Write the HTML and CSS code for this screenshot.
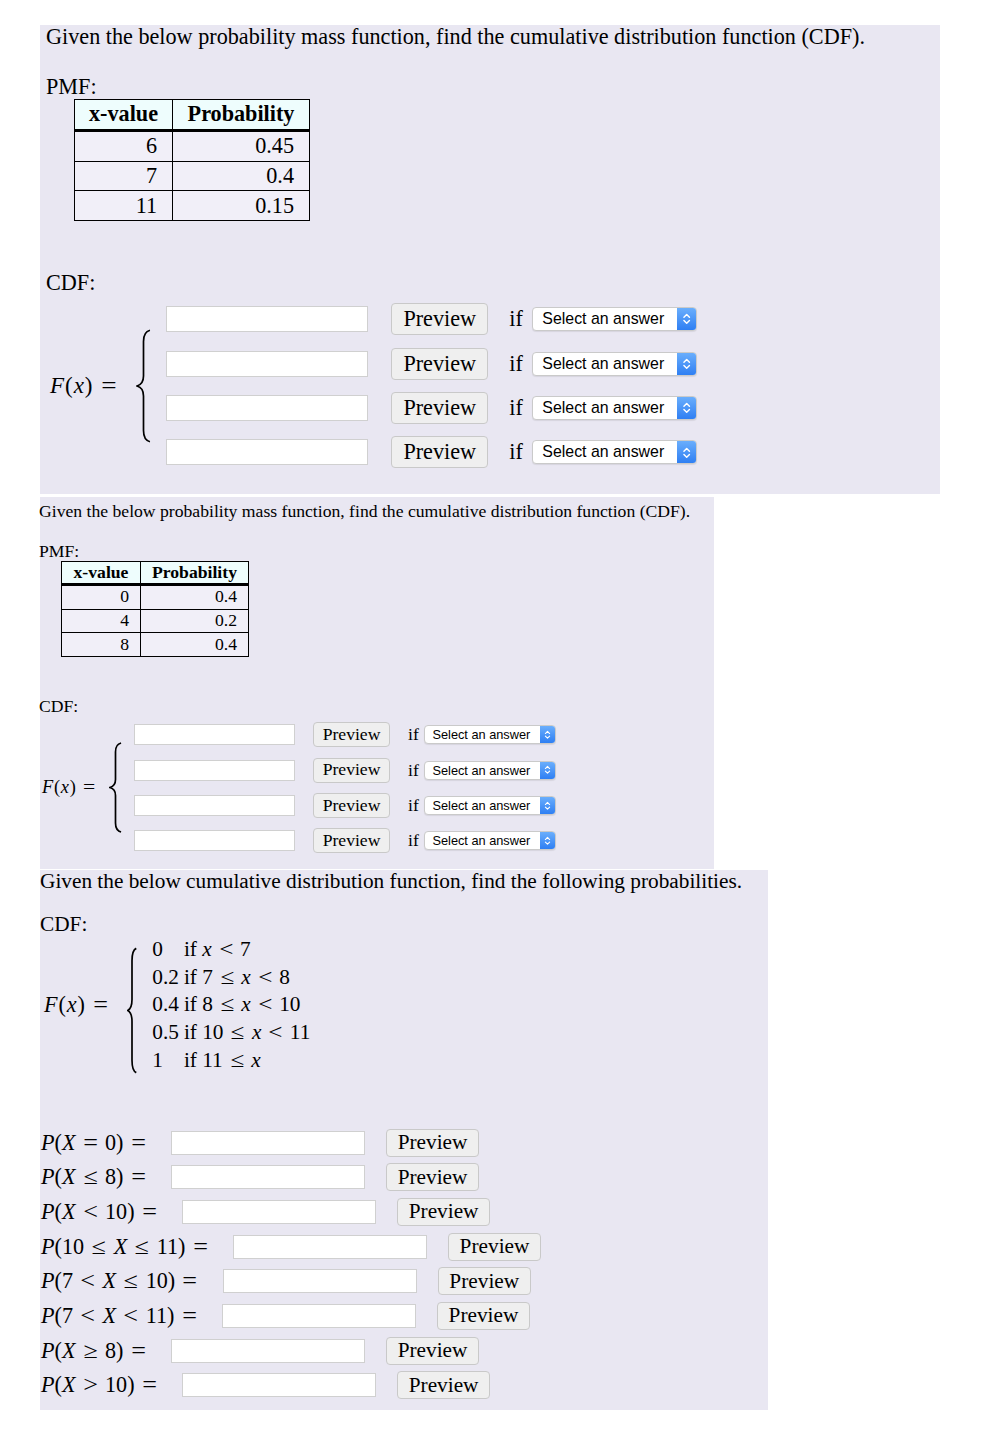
FILE: index.html
```html
<!DOCTYPE html>
<html>
<head>
<meta charset="utf-8">
<link rel="stylesheet" href="styles.css">
</head>
<body>
<div class="page">

  <section class="panel p1">
    <div class="title">Given the below probability mass function, find the cumulative distribution function (CDF).</div>
    <div class="label lbl-pmf">PMF:</div>
    <table class="pmf">
      <thead><tr><th class="c1">x-value</th><th class="c2">Probability</th></tr></thead>
      <tbody>
        <tr><td>6</td><td>0.45</td></tr>
        <tr><td>7</td><td>0.4</td></tr>
        <tr><td>11</td><td>0.15</td></tr>
      </tbody>
    </table>
    <div class="label lbl-cdf">CDF:</div>
    <div class="piecewise">
      <div class="fx math"><i>F</i>(<i>x</i>)<span class="rel">=</span></div>
      <svg class="brace" viewBox="0 0 14 92" preserveAspectRatio="none"><path d="M13 1 C8.5 2 7 5 7 10 L7 38 C7 43 5 45 1 46 C5 47 7 49 7 54 L7 82 C7 87 8.5 90 13 91" /></svg>
      <div class="rows">
        <div class="row"><input class="ans" type="text"><button class="preview">Preview</button><span class="if">if</span><span class="select"><span class="sel-text">Select an answer</span><span class="sel-arrow"><svg viewBox="0 0 10 16"><path d="M2.5 6.5 L5 4 L7.5 6.5 M2.5 9.5 L5 12 L7.5 9.5"/></svg></span></span></div>
        <div class="row"><input class="ans" type="text"><button class="preview">Preview</button><span class="if">if</span><span class="select"><span class="sel-text">Select an answer</span><span class="sel-arrow"><svg viewBox="0 0 10 16"><path d="M2.5 6.5 L5 4 L7.5 6.5 M2.5 9.5 L5 12 L7.5 9.5"/></svg></span></span></div>
        <div class="row"><input class="ans" type="text"><button class="preview">Preview</button><span class="if">if</span><span class="select"><span class="sel-text">Select an answer</span><span class="sel-arrow"><svg viewBox="0 0 10 16"><path d="M2.5 6.5 L5 4 L7.5 6.5 M2.5 9.5 L5 12 L7.5 9.5"/></svg></span></span></div>
        <div class="row"><input class="ans" type="text"><button class="preview">Preview</button><span class="if">if</span><span class="select"><span class="sel-text">Select an answer</span><span class="sel-arrow"><svg viewBox="0 0 10 16"><path d="M2.5 6.5 L5 4 L7.5 6.5 M2.5 9.5 L5 12 L7.5 9.5"/></svg></span></span></div>
      </div>
    </div>
  </section>

  <section class="panel p2">
    <div class="title">Given the below probability mass function, find the cumulative distribution function (CDF).</div>
    <div class="label lbl-pmf">PMF:</div>
    <table class="pmf">
      <thead><tr><th class="c1">x-value</th><th class="c2">Probability</th></tr></thead>
      <tbody>
        <tr><td>0</td><td>0.4</td></tr>
        <tr><td>4</td><td>0.2</td></tr>
        <tr><td>8</td><td>0.4</td></tr>
      </tbody>
    </table>
    <div class="label lbl-cdf">CDF:</div>
    <div class="piecewise">
      <div class="fx math"><i>F</i>(<i>x</i>)<span class="rel">=</span></div>
      <svg class="brace" viewBox="0 0 14 92" preserveAspectRatio="none"><path d="M13 1 C8.5 2 7 5 7 10 L7 38 C7 43 5 45 1 46 C5 47 7 49 7 54 L7 82 C7 87 8.5 90 13 91" /></svg>
      <div class="rows">
        <div class="row"><input class="ans" type="text"><button class="preview">Preview</button><span class="if">if</span><span class="select"><span class="sel-text">Select an answer</span><span class="sel-arrow"><svg viewBox="0 0 10 16"><path d="M2.5 6.5 L5 4 L7.5 6.5 M2.5 9.5 L5 12 L7.5 9.5"/></svg></span></span></div>
        <div class="row"><input class="ans" type="text"><button class="preview">Preview</button><span class="if">if</span><span class="select"><span class="sel-text">Select an answer</span><span class="sel-arrow"><svg viewBox="0 0 10 16"><path d="M2.5 6.5 L5 4 L7.5 6.5 M2.5 9.5 L5 12 L7.5 9.5"/></svg></span></span></div>
        <div class="row"><input class="ans" type="text"><button class="preview">Preview</button><span class="if">if</span><span class="select"><span class="sel-text">Select an answer</span><span class="sel-arrow"><svg viewBox="0 0 10 16"><path d="M2.5 6.5 L5 4 L7.5 6.5 M2.5 9.5 L5 12 L7.5 9.5"/></svg></span></span></div>
        <div class="row"><input class="ans" type="text"><button class="preview">Preview</button><span class="if">if</span><span class="select"><span class="sel-text">Select an answer</span><span class="sel-arrow"><svg viewBox="0 0 10 16"><path d="M2.5 6.5 L5 4 L7.5 6.5 M2.5 9.5 L5 12 L7.5 9.5"/></svg></span></span></div>
      </div>
    </div>
  </section>

  <section class="panel p3">
    <div class="title">Given the below cumulative distribution function, find the following probabilities.</div>
    <div class="label lbl-cdf">CDF:</div>
    <div class="cases-block">
      <div class="fx math"><i>F</i>(<i>x</i>)<span class="rel">=</span></div>
      <svg class="brace" viewBox="0 0 14 92" preserveAspectRatio="none"><path d="M13 1 C8.5 2 7 5 7 10 L7 38 C7 43 5 45 1 46 C5 47 7 49 7 54 L7 82 C7 87 8.5 90 13 91" /></svg>
      <div class="cases">
        <span class="cv">0</span><span class="cc">if <i>x</i><span class="rel">&lt;</span>7</span>
        <span class="cv">0.2</span><span class="cc">if 7<span class="rel">≤</span><i>x</i><span class="rel">&lt;</span>8</span>
        <span class="cv">0.4</span><span class="cc">if 8<span class="rel">≤</span><i>x</i><span class="rel">&lt;</span>10</span>
        <span class="cv">0.5</span><span class="cc">if 10<span class="rel">≤</span><i>x</i><span class="rel">&lt;</span>11</span>
        <span class="cv">1</span><span class="cc">if 11<span class="rel">≤</span><i>x</i></span>
      </div>
    </div>
    <div class="probs">
      <div class="prow"><span class="plabel math"><i>P</i>(<i>X</i><span class="rel">=</span>0)<span class="rel">=</span></span><input class="ans" type="text"><button class="preview">Preview</button></div>
      <div class="prow"><span class="plabel math"><i>P</i>(<i>X</i><span class="rel">≤</span>8)<span class="rel">=</span></span><input class="ans" type="text"><button class="preview">Preview</button></div>
      <div class="prow"><span class="plabel math"><i>P</i>(<i>X</i><span class="rel">&lt;</span>10)<span class="rel">=</span></span><input class="ans" type="text"><button class="preview">Preview</button></div>
      <div class="prow"><span class="plabel math"><i>P</i>(10<span class="rel">≤</span><i>X</i><span class="rel">≤</span>11)<span class="rel">=</span></span><input class="ans" type="text"><button class="preview">Preview</button></div>
      <div class="prow"><span class="plabel math"><i>P</i>(7<span class="rel">&lt;</span><i>X</i><span class="rel">≤</span>10)<span class="rel">=</span></span><input class="ans" type="text"><button class="preview">Preview</button></div>
      <div class="prow"><span class="plabel math"><i>P</i>(7<span class="rel">&lt;</span><i>X</i><span class="rel">&lt;</span>11)<span class="rel">=</span></span><input class="ans" type="text"><button class="preview">Preview</button></div>
      <div class="prow"><span class="plabel math"><i>P</i>(<i>X</i><span class="rel">≥</span>8)<span class="rel">=</span></span><input class="ans" type="text"><button class="preview">Preview</button></div>
      <div class="prow"><span class="plabel math"><i>P</i>(<i>X</i><span class="rel">&gt;</span>10)<span class="rel">=</span></span><input class="ans" type="text"><button class="preview">Preview</button></div>
    </div>
  </section>

</div>
</body>
</html>
```

FILE: styles.css
```css
html, body {
  margin: 0;
  padding: 0;
  background: #ffffff;
}

body {
  font-family: "Liberation Serif", "Times New Roman", serif;
  color: #000;
}

.page {
  padding: 26px 0 0 40px;
}

.panel {
  background: #e9e7f2;
  box-sizing: border-box;
  font-size: var(--fs);
}

.title, .label {
  line-height: var(--lh);
  white-space: nowrap;
}

/* ---------- panel 1 (large) ---------- */
.p1 {
  --fs: 22.2px;
  --lh: 23px;
  --in-w: 202px;
  --in-h: 26px;
  --btn-w: 97px;
  --btn-h: 32px;
  --sel-w: 165px;
  --sel-h: 24px;
  --sel-fs: 15.9px;
  --arrow-w: 19px;
  --row-h: 44.4px;
  --gap-ib: 23px;
  --gap-bi: 21px;
  --gap-is: 9px;
  width: 900px;
  height: 469px;
  padding: 0 0 0 6px;
}
.p1 .title { margin-top: -1px; }
.p1 .lbl-pmf { margin-top: 27px; }
.p1 .pmf { margin: 1px 0 0 28px; width: 236px; }
.p1 .pmf .c1 { width: 97px; }
.p1 .pmf th { height: 29px; }
.p1 .pmf td { height: 28.7px; padding-right: 15px; }
.p1 .lbl-cdf { margin-top: 50px; }
.p1 .piecewise { margin-top: 3px; }
.p1 .fx { margin-left: 4px; }
.p1 .brace { width: 15px; height: 114px; margin: 0 15px 0 12px; }

/* ---------- panel 2 (small) ---------- */
.p2 {
  --fs: 17.65px;
  --lh: 18.4px;
  --in-w: 161px;
  --in-h: 21px;
  --btn-w: 77px;
  --btn-h: 25px;
  --sel-w: 132px;
  --sel-h: 19px;
  --sel-fs: 12.75px;
  --arrow-w: 15px;
  --row-h: 35.3px;
  --gap-ib: 18px;
  --gap-bi: 18px;
  --gap-is: 5px;
  width: 674px;
  height: 372px;
  margin-top: 3px;
  padding: 5px 0 0 0;
}
.p2 .title { margin-left: -1px; }
.p2 .lbl-pmf { margin-top: 22px; margin-left: -1px; }
.p2 .pmf { margin: 0 0 0 21px; width: 188px; }
.p2 .pmf .c1 { width: 78px; }
.p2 .pmf th { height: 21px; }
.p2 .pmf td { height: 22.7px; padding-right: 11px; }
.p2 .lbl-cdf { margin-top: 40px; margin-left: -1px; }
.p2 .piecewise { margin-top: 2px; }
.p2 .fx { margin-left: 2px; }
.p2 .brace { width: 13px; height: 91px; margin: 0 12px 0 8px; }

/* ---------- PMF table ---------- */
.pmf {
  border-collapse: collapse;
  table-layout: fixed;
  border: 1px solid #000;
  font-size: 1em;
}
.pmf th {
  background: #eefdfd;
  font-weight: bold;
  padding: 0;
  border: 1px solid #000;
  border-bottom: 3px solid #000;
  text-align: center;
  line-height: 1.1em;
}
.pmf td {
  background: #f1eff8;
  border: 1px solid #000;
  padding-top: 0;
  padding-bottom: 0;
  padding-left: 0;
  text-align: right;
  line-height: 1.1em;
}

/* ---------- math ---------- */
.math {
  font-size: 1.04em;
  white-space: nowrap;
}
.fx {
  letter-spacing: 0.04em;
}
.rel {
  display: inline-block;
  width: 0.78em;
  margin: 0 0.278em;
  text-align: center;
  letter-spacing: 0;
  transform: scaleX(1.18);
}

/* ---------- piecewise with inputs ---------- */
.piecewise {
  display: flex;
  align-items: center;
}
.brace {
  flex: none;
}
.brace path {
  fill: none;
  stroke: #000;
  stroke-width: 1.7;
  vector-effect: non-scaling-stroke;
}
.rows {
  display: flex;
  flex-direction: column;
}
.row {
  display: flex;
  align-items: center;
  height: var(--row-h);
}

.ans {
  box-sizing: border-box;
  flex: none;
  width: var(--in-w);
  height: var(--in-h);
  margin: 0;
  padding: 0 4px;
  border: 1px solid #d0d0d0;
  background: #fff;
  font-size: 1em;
  outline: none;
}

.preview {
  box-sizing: border-box;
  flex: none;
  width: var(--btn-w);
  height: var(--btn-h);
  margin: 0 0 0 var(--gap-ib);
  padding: 0;
  font-family: "Liberation Serif", "Times New Roman", serif;
  font-size: var(--fs);
  line-height: 1;
  background: #efefef;
  border: 1px solid #c9c9c9;
  border-radius: 4px;
  color: #000;
}

.if {
  margin: 0 var(--gap-is) 0 var(--gap-bi);
}

.select {
  box-sizing: border-box;
  display: flex;
  align-items: stretch;
  width: var(--sel-w);
  height: var(--sel-h);
  background: #fff;
  border: 1px solid #cacaca;
  border-radius: 4px;
  overflow: hidden;
  box-shadow: 0 1px 1px rgba(0,0,0,0.08);
}
.sel-text {
  flex: 1;
  font-family: "Liberation Sans", Arial, sans-serif;
  font-size: var(--sel-fs);
  line-height: calc(var(--sel-h) - 2px);
  padding-left: calc(var(--sel-fs) * 0.6);
  white-space: nowrap;
  overflow: hidden;
}
.sel-arrow {
  flex: none;
  width: var(--arrow-w);
  background: linear-gradient(#6aaefc, #2f7ff3);
  display: flex;
  align-items: center;
  justify-content: center;
}
.sel-arrow svg {
  width: 60%;
  height: 80%;
}
.sel-arrow path {
  fill: none;
  stroke: #fff;
  stroke-width: 1.3;
  stroke-linecap: round;
  stroke-linejoin: round;
}

/* ---------- panel 3 ---------- */
.p3 {
  --fs: 21.3px;
  --lh: 22px;
  --in-w: 194px;
  --in-h: 24px;
  --btn-w: 93px;
  --btn-h: 28px;
  --row-h: 34.7px;
  --gap-ib: 21px;
  width: 728px;
  height: 540px;
  padding: 0;
}
.p3 .title { margin-top: 1px; }
.p3 .lbl-cdf { margin-top: 21px; }
.cases-block {
  display: flex;
  align-items: center;
  margin-top: 1px;
}
.cases-block .fx { margin-left: 4px; }
.cases-block .brace {
  width: 10px;
  height: 127px;
  margin: 10px 15px 0 12px;
}
.cases {
  display: grid;
  grid-template-columns: auto auto;
  column-gap: 5px;
  line-height: 27.65px;
  white-space: nowrap;
}

.probs {
  margin-top: 51px;
  display: flex;
  flex-direction: column;
}
.prow {
  display: flex;
  align-items: center;
  height: var(--row-h);
}
.plabel {
  margin-left: 1px;
}
.p3 .ans {
  margin-left: 18px;
}
```
